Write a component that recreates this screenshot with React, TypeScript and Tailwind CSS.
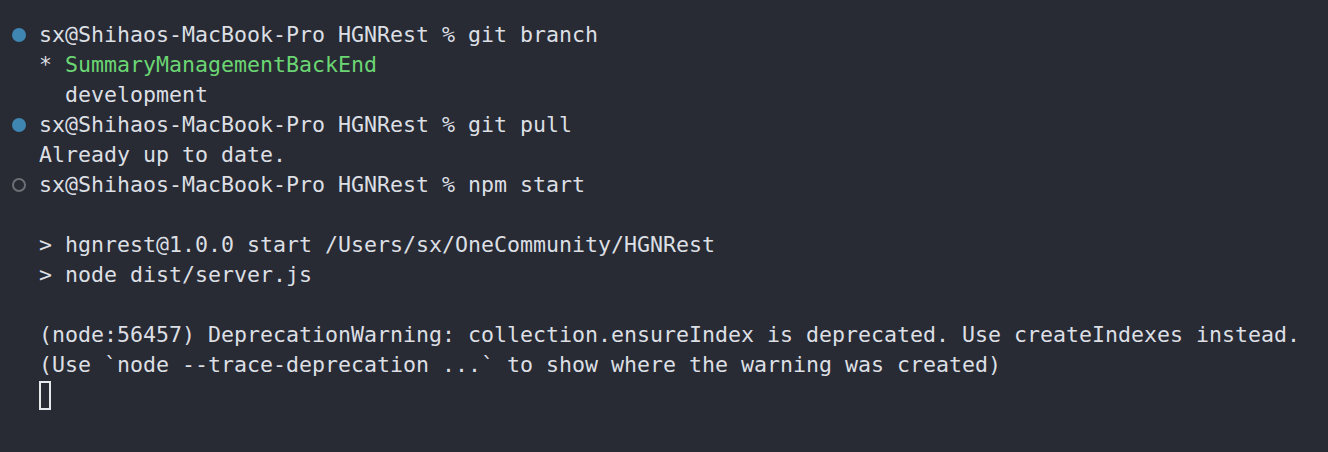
import React from "react";

type Mark = "filled" | "hollow" | null;

interface Line {
  mark?: Mark;
  text?: React.ReactNode;
}

const Prompt = ({ cmd }: { cmd: string }) => (
  <span>sx@Shihaos-MacBook-Pro HGNRest % {cmd}</span>
);

const lines: Line[] = [
  { mark: "filled", text: <Prompt cmd="git branch" /> },
  {
    text: (
      <span>
        * <span className="text-[#6bd673]">SummaryManagementBackEnd</span>
      </span>
    ),
  },
  { text: "  development" },
  { mark: "filled", text: <Prompt cmd="git pull" /> },
  { text: "Already up to date." },
  { mark: "hollow", text: <Prompt cmd="npm start" /> },
  {},
  { text: "> hgnrest@1.0.0 start /Users/sx/OneCommunity/HGNRest" },
  { text: "> node dist/server.js" },
  {},
  {
    text: "(node:56457) DeprecationWarning: collection.ensureIndex is deprecated. Use createIndexes instead.",
  },
  { text: "(Use `node --trace-deprecation ...` to show where the warning was created)" },
];

const Gutter = ({ mark }: { mark?: Mark }) => (
  <div className="w-[39px] flex items-center justify-center pr-[1px]">
    {mark === "filled" && <div className="w-[14px] h-[14px] rounded-full bg-[#3f86b3]" />}
    {mark === "hollow" && (
      <div className="w-[14px] h-[14px] rounded-full border-2 border-[#6c6f75]" />
    )}
  </div>
);

export default function App() {
  return (
    <div
      className="w-[1328px] h-[452px] bg-[#282b33] text-[#dcdfe4] pt-[20px] overflow-hidden"
      style={{ fontFamily: '"DejaVu Sans Mono", "Liberation Mono", monospace' }}
    >
      {lines.map((l, i) => (
        <div key={i} className="flex h-[30px] items-center">
          <Gutter mark={l.mark} />
          <div className="whitespace-pre text-[21.6px] leading-[30px]">{l.text ?? ""}</div>
        </div>
      ))}
      <div className="flex h-[30px] items-center">
        <div className="w-[39px]" />
        <div className="w-[12px] h-[29px] border-2 border-[#e6e8ec]" />
      </div>
    </div>
  );
}
